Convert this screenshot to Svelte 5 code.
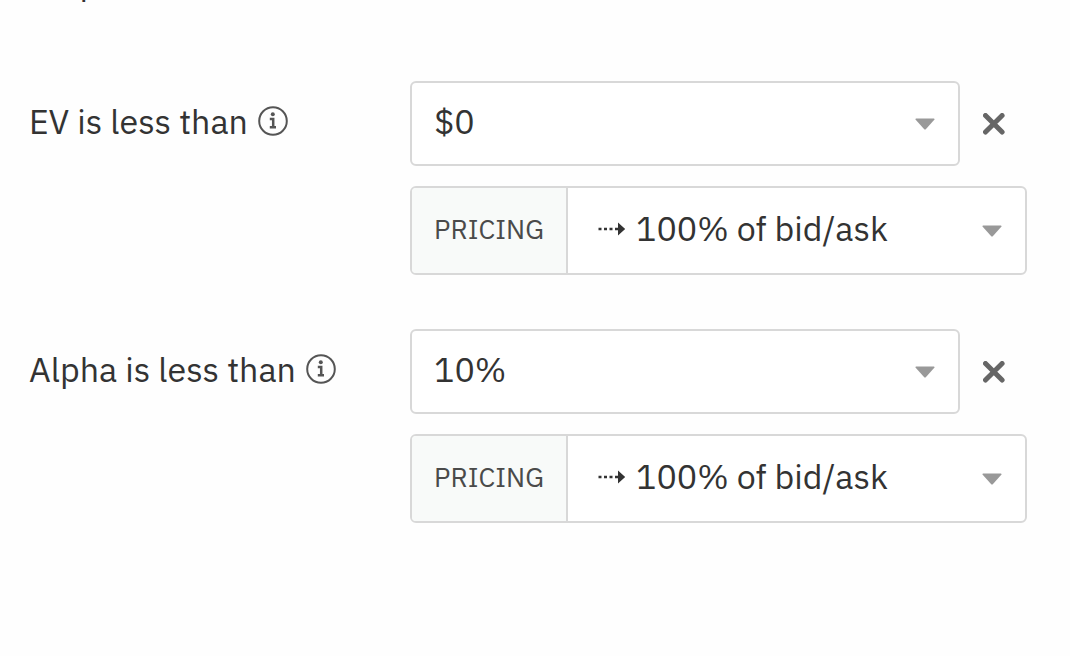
<script lang="ts">
  type Criterion = {
    id: string;
    label: string;
    value: string;
    options: string[];
    pricing: string;
  };

  const pricingOptions = ['100% of bid/ask', '75% of bid/ask', '50% of bid/ask'];

  let criteria = $state<Criterion[]>([
    { id: 'ev', label: 'EV is less than', value: '$0', options: ['$0', '$10', '$25'], pricing: pricingOptions[0] },
    { id: 'alpha', label: 'Alpha is less than', value: '10%', options: ['5%', '10%', '20%'], pricing: pricingOptions[0] }
  ]);

  function remove(id: string) {
    criteria = criteria.filter((c) => c.id !== id);
  }
</script>

{#snippet caret()}
  <svg class="caret" viewBox="0 0 20 12" aria-hidden="true">
    <path d="M1.2 0.5h17.6q1.4 0 0.5 1.2L11 11q-1 1-2 0L0.7 1.7Q-0.2 0.5 1.2 0.5z" />
  </svg>
{/snippet}

<main class="criteria">
  <h2 class="heading">Stop</h2>

  {#each criteria as item (item.id)}
    <section class="row">
      <div class="title">
        <label for={item.id}>{item.label}</label>
        <button class="info" type="button" aria-label="About {item.label}">
          <svg viewBox="0 0 30 30" aria-hidden="true">
            <circle cx="15" cy="15" r="13.8" />
            <circle class="dot" cx="14.8" cy="8.2" r="2" />
            <path d="M11.8 12.9h3.4v8.4M11.8 21.3h6.2" />
          </svg>
        </button>
      </div>

      <div class="controls">
        <div class="line">
          <div class="field">
            <select id={item.id} bind:value={item.value}>
              {#each item.options as option}
                <option>{option}</option>
              {/each}
            </select>
            {@render caret()}
          </div>
          <button class="remove" type="button" aria-label="Remove" onclick={() => remove(item.id)}>
            <svg viewBox="0 0 22 22" aria-hidden="true">
              <path d="M2.5 2.5l16.6 16.6M19.1 2.5l-16.6 16.6" />
            </svg>
          </button>
        </div>

        <div class="field pricing">
          <label class="addon" for="{item.id}-pricing">PRICING</label>
          <svg class="arrow" viewBox="0 0 28 14" aria-hidden="true">
            <path d="M0.5 5.7h3v2.6h-3zM6 5.7h3v2.6h-3zM11.5 5.7h3v2.6h-3zM17 5.7h3V0.5L27.2 7 20 13.5V8.3h-3z" />
          </svg>
          <select id="{item.id}-pricing" bind:value={item.pricing}>
            {#each pricingOptions as option}
              <option>{option}</option>
            {/each}
          </select>
          {@render caret()}
        </div>
      </div>
    </section>
  {/each}
</main>

<style>
:global(body) {
  margin: 0;
  background: #fefefe;
}
.criteria {
  padding: 0 43px 40px 29px;
  font-family: 'IBM Plex Sans', Roboto, 'Liberation Sans', sans-serif;
  font-size: 34px;
  line-height: 40px;
  color: #333;
}
/* scrolled past, only the descender is left */
.heading {
  display: flex;
  align-items: flex-end;
  height: 2px;
  margin: 0 0 79px;
  overflow: hidden;
  font-size: 34px;
  font-weight: 400;
  line-height: 32px;
}
.row {
  display: grid;
  grid-template-columns: 381px 1fr;
  margin-bottom: 54px;
}
.title {
  display: flex;
  align-items: center;
  gap: 10px;
  height: 80px;
  white-space: nowrap;
}
button {
  padding: 0;
  border: 0;
  background: none;
  cursor: pointer;
}
.info,
.info svg {
  display: block;
  width: 30px;
  height: 30px;
}
.info svg {
  fill: none;
  stroke: #555;
  stroke-width: 2;
}
.info path {
  stroke-width: 2.5;
}
.info .dot {
  fill: #555;
  stroke: none;
}
.controls {
  display: flex;
  flex-direction: column;
  gap: 20px;
}
.line {
  display: flex;
  align-items: center;
}
.field {
  position: relative;
  display: flex;
  flex: 1;
  align-items: center;
  box-sizing: border-box;
  height: 85px;
  border: 2px solid #d8d8d8;
  border-radius: 6px;
  background: #fff;
  overflow: hidden;
}
.pricing {
  flex: none;
  height: 89px;
}
select {
  flex: 1;
  min-width: 0;
  height: 100%;
  padding: 0 60px 6px 22px;
  border: 0;
  outline: 0;
  appearance: none;
  background: none;
  font: inherit;
  color: inherit;
}
.pricing select {
  padding-left: 10px;
}
.caret {
  position: absolute;
  right: 23px;
  width: 20px;
  height: 12px;
  fill: #999;
  pointer-events: none;
}
.addon {
  display: flex;
  align-items: center;
  justify-content: center;
  box-sizing: border-box;
  width: 156px;
  height: 100%;
  padding-bottom: 4px;
  border-right: 2px solid #d8d8d8;
  background: #f8faf9;
  font-size: 27px;
  color: #4a4a4a;
}
.arrow {
  width: 28px;
  height: 14px;
  margin: 0 0 4px 30px;
  fill: #333;
}
.remove {
  display: flex;
  align-items: center;
  justify-content: center;
  width: 67px;
  height: 60px;
}
.remove svg {
  width: 22px;
  height: 22px;
  stroke: #666;
  stroke-width: 5;
  stroke-linecap: round;
}
</style>
